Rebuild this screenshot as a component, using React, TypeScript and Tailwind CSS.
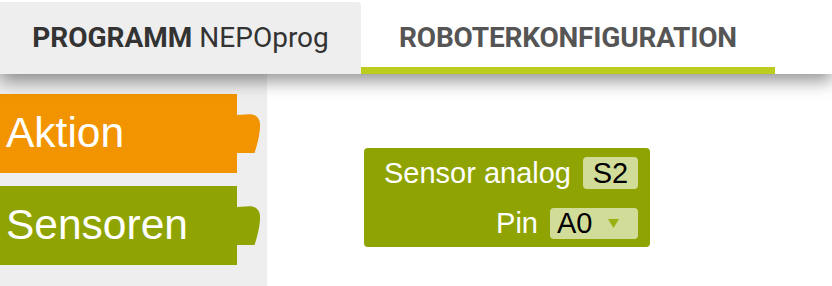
import React from "react";

function Notch({ color }: { color: string }) {
  return (
    <svg width="26" height="42" viewBox="0 0 26 42" className="block">
      <path
        d="M0 1 L12 0.2 C18 0 22.5 3 23 10 C23.4 18 20.5 30 17.5 39 L0 39 Z"
        fill={color}
      />
    </svg>
  );
}

function Category({ label, color }: { label: string; color: string }) {
  return (
    <div className="flex items-start">
      <div
        className="w-[237px] h-[79px] flex items-center pl-[6px] text-white text-[42.5px] leading-none"
        style={{ backgroundColor: color, fontFamily: '"Liberation Sans", Arial, sans-serif' }}
      >
        {label}
      </div>
      <div className="mt-[20px]">
        <Notch color={color} />
      </div>
    </div>
  );
}

export default function App() {
  return (
    <div className="w-[832px] h-[286px] bg-white overflow-hidden relative">
      <header
        className="relative z-10 flex h-[74px] bg-white shadow-[0_7px_16px_rgba(0,0,0,0.42)]"
        style={{ fontFamily: 'Roboto, "Noto Sans", sans-serif' }}
      >
        <div className="mt-[2px] w-[361px] h-[72px] bg-[#eeeeee] rounded-tr-[4px] flex items-center justify-center text-[28px] text-[#333333]">
          <span className="font-bold">PROGRAMM</span>
          <span className="ml-[7px]">NEPOprog</span>
        </div>
        <div className="mt-[2px] w-[414px] h-[72px] pt-[7px] border-b-[7px] border-[#bbcc1e] flex items-center justify-center text-[28px] font-bold text-[#555555] tracking-[-0.2px]">
          ROBOTERKONFIGURATION
        </div>
      </header>
      <div className="flex h-[212px]">
        <div className="w-[267px] h-full bg-[#eeeeee] pt-[20px] flex flex-col gap-[13px]">
          <Category label="Aktion" color="#f29400" />
          <Category label="Sensoren" color="#8fa402" />
        </div>
        <div className="flex-1 pl-[97px] pt-[74px]">
          <div
            className="w-[286px] h-[99px] bg-[#8fa402] rounded-[4px] pt-[9px] pr-[12px] flex flex-col items-end gap-[19px] text-white text-[29px] leading-none"
            style={{ fontFamily: '"Liberation Sans", Arial, sans-serif' }}
          >
            <div className="flex items-center gap-[12px] h-[32px]">
              <span>Sensor analog</span>
              <span className="h-[32px] w-[55px] rounded-[4px] bg-[#d1dc99] text-black flex items-center justify-center">
                S2
              </span>
            </div>
            <div className="flex items-center gap-[12px] h-[31px]">
              <span>Pin</span>
              <span className="h-[31px] w-[88px] rounded-[4px] bg-[#d1dc99] text-black flex items-center pl-[7px]">
                A0
                <svg width="11" height="9" viewBox="0 0 11 9" className="ml-[16px]">
                  <path d="M0 0 L11 0 L5.5 9 Z" fill="#9bb012" />
                </svg>
              </span>
            </div>
          </div>
        </div>
      </div>
    </div>
  );
}
